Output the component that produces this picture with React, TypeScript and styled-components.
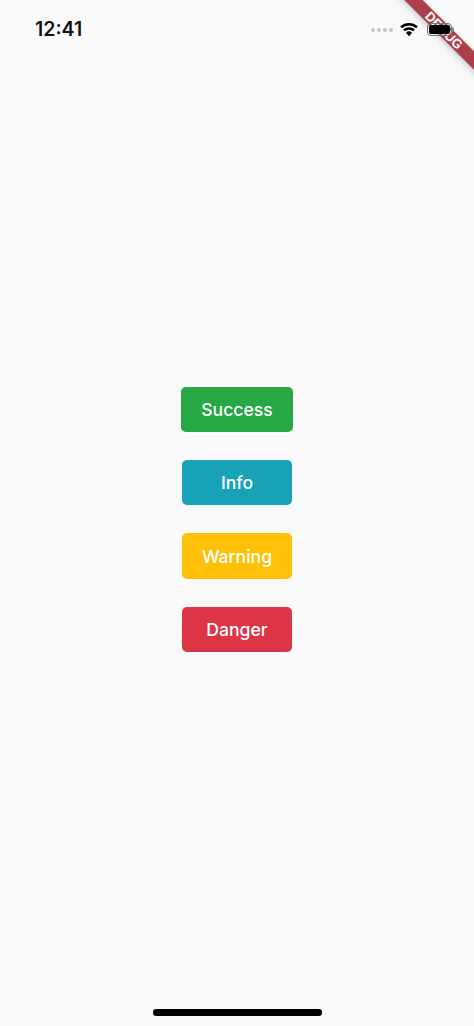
import React from "react";
import styled, { createGlobalStyle } from "styled-components";

const GlobalStyle = createGlobalStyle`
  html, body {
    margin: 0;
    padding: 0;
    background: #fafafa;
  }
`;

const buttons = [
  { label: "Success", color: "#28a745", wide: true },
  { label: "Info", color: "#17a2b8", wide: false },
  { label: "Warning", color: "#ffc107", wide: false },
  { label: "Danger", color: "#dc3545", wide: false },
];

const App = () => {
  return (
    <>
      <GlobalStyle />
      <Screen>
        <StatusBar>
          <Time>12:41</Time>
          <StatusIcons>
            <Signal>
              <Dot />
              <Dot />
              <Dot />
              <Dot />
            </Signal>
            <svg width="18" height="15" viewBox="0 0 17 14">
              <path
                d="M1 4.9 A11 11 0 0 1 16 4.9 M3.7 7.8 A7.2 7.2 0 0 1 13.3 7.8"
                fill="none"
                stroke="#000"
                strokeWidth="2.4"
              />
              <path d="M5.6 10 A4.2 4.2 0 0 1 11.4 10 L8.5 13.4 Z" fill="#000" />
            </svg>
            <Battery>
              <BatteryFill />
            </Battery>
          </StatusIcons>
        </StatusBar>
        <Main>
          {buttons.map((item) => (
            <Button key={item.label} color={item.color} $wide={item.wide}>
              {item.label}
            </Button>
          ))}
        </Main>
        <HomeArea>
          <HomeIndicator />
        </HomeArea>
        <DebugBanner>DEBUG</DebugBanner>
      </Screen>
    </>
  );
};

export default App;

const Screen = styled.div`
  position: relative;
  display: flex;
  flex-direction: column;
  width: 474px;
  height: 1026px;
  overflow: hidden;
  background: #fafafa;
  font-family: Inter, "Liberation Sans", sans-serif;
`;

const StatusBar = styled.div`
  display: flex;
  justify-content: space-between;
  align-items: center;
  height: 50px;
  padding: 8px 22px 0 35px;
  box-sizing: border-box;
`;

const Time = styled.div`
  font-size: 19.5px;
  font-weight: 600;
  color: #111;
  line-height: 22px;
`;

// the status icons sit above the debug ribbon
const StatusIcons = styled.div`
  position: relative;
  z-index: 2;
  display: flex;
  align-items: center;
`;

const Signal = styled.div`
  display: flex;
  gap: 2px;
  margin-right: 7px;
  margin-top: 2px;
`;

const Dot = styled.span`
  width: 4px;
  height: 4px;
  border-radius: 50%;
  background: #c4c4c4;
`;

const Battery = styled.div`
  position: relative;
  width: 25px;
  height: 13px;
  margin-left: 9px;
  margin-top: 1px;
  padding: 1px;
  box-sizing: border-box;
  border: 1px solid #777;
  border-radius: 4px;

  &::after {
    content: "";
    position: absolute;
    right: -3px;
    top: 3px;
    width: 2px;
    height: 5px;
    border-radius: 0 2px 2px 0;
    background: #888;
  }
`;

const BatteryFill = styled.div`
  height: 100%;
  background: #000;
  border-radius: 2px;
`;

const Main = styled.main`
  flex: 1;
  display: flex;
  flex-direction: column;
  align-items: center;
  justify-content: center;
  gap: 28px;
`;

const Button = styled.button<{ color: string; $wide: boolean }>`
  width: ${(props) => (props.$wide ? "112px" : "110px")};
  height: 45.33px;
  padding: 0;
  border: none;
  border-radius: 5px;
  background: ${(props) => props.color};
  color: #fff;
  font-family: inherit;
  font-size: 17.6px;
  font-weight: 500;
`;

const HomeArea = styled.div`
  display: flex;
  justify-content: center;
  height: 37.07px;
  padding-top: 20.4px;
  box-sizing: border-box;
`;

const HomeIndicator = styled.div`
  width: 169px;
  height: 6.5px;
  border-radius: 3.25px;
  background: #000;
`;

const DebugBanner = styled.div`
  position: absolute;
  z-index: 1;
  top: 24px;
  right: -30px;
  width: 120px;
  height: 13px;
  line-height: 13px;
  text-align: center;
  transform: rotate(45deg);
  background: #ab3f49;
  box-shadow: 0 2px 6px rgba(0, 0, 0, 0.22);
  color: #fff;
  font-family: "Liberation Sans", sans-serif;
  font-size: 13px;
  font-weight: 700;
`;
